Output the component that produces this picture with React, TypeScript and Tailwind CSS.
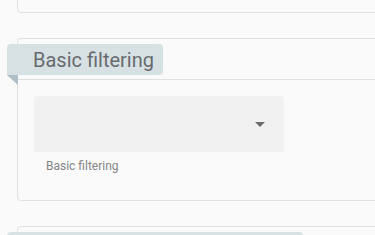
import React from 'react';

const Tab: React.FC<{ label?: string; width: string }> = ({ label, width }) => (
  <div className={`absolute left-[-11px] top-[5px] ${width}`}>
    <div className="h-[31px] rounded-[4px] rounded-bl-none bg-[#d7e1e4] pl-[26px] flex items-center text-[20px] text-[#686b6e] leading-none">
      {label}
    </div>
    <svg width="11" height="10" viewBox="0 0 11 10" className="block">
      <polygon points="0,0 11,0 11,10" fill="#aebec4" />
    </svg>
  </div>
);

const App: React.FC = () => {
  return (
    <div className="h-[235px] overflow-hidden bg-[#fafafa] pl-[17px] font-['Roboto',sans-serif]">
      <div className="flex flex-col gap-[25px] mr-[-20px]">
        <div className="mt-[-27px] h-[40px] rounded-[4px] border border-[#e0e0e0] bg-[#fafafa]" />

        <div className="relative h-[163px] rounded-[4px] border border-[#e0e0e0] bg-[#fafafa]">
          <div className="h-[41px] border-b border-[#e0e0e0]" />
          <div className="pt-[16px] pl-[16px]">
            <div className="relative h-[56px] w-[250px] rounded-t-[4px] bg-[#f1f1f1]">
              <svg width="10" height="5" viewBox="0 0 10 5" className="absolute left-[221px] top-[26px]">
                <polygon points="0,0 10,0 5,5" fill="#6b6b6b" />
              </svg>
            </div>
            <div className="pl-[12px] pt-[6px] text-[12px] leading-[16px] text-[#858585]">Basic filtering</div>
          </div>
          <Tab label="Basic filtering" width="w-[156px]" />
        </div>

        <div className="relative h-[60px] rounded-[4px] border border-[#e0e0e0] bg-[#fafafa]">
          <Tab width="w-[296px]" />
        </div>
      </div>
    </div>
  );
};

export default App;
